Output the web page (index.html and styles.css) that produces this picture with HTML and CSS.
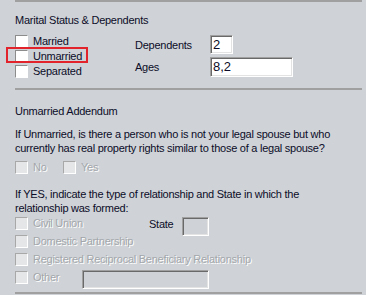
FILE: index.html
```html
<!DOCTYPE html>
<html>
<head>
<meta charset="utf-8">
<link rel="stylesheet" href="styles.css">
</head>
<body>
<div class="panel">
  <section class="group first">
    <h2 class="title">Marital Status &amp; Dependents</h2>
    <div class="status">
      <div class="checks">
        <label class="check"><span class="box"></span><span class="text">Married</span></label>
        <label class="check highlight"><span class="box"></span><span class="text">Unmarried</span></label>
        <label class="check"><span class="box"></span><span class="text">Separated</span></label>
      </div>
      <div class="fields">
        <span class="lbl">Dependents</span><span class="input small">2</span>
        <span class="lbl">Ages</span><span class="input wide">8,2</span>
      </div>
    </div>
  </section>
  <section class="group second">
    <h2 class="title">Unmarried Addendum</h2>
    <p class="para">If Unmarried, is there a person who is not your legal spouse but who<br>currently has real property rights similar to those of a legal spouse?</p>
    <div class="yesno">
      <label class="check off"><span class="box"></span><span class="text">No</span></label>
      <label class="check off"><span class="box"></span><span class="text">Yes</span></label>
    </div>
    <p class="para second-para">If YES, indicate the type of relationship and State in which the<br>relationship was formed:</p>
    <div class="relations">
      <div class="rel">
        <label class="check off"><span class="box"></span><span class="text civil">Civil Union</span></label>
        <span class="lbl state">State</span><span class="input off statebox"></span>
      </div>
      <div class="rel">
        <label class="check off"><span class="box"></span><span class="text">Domestic Partnership</span></label>
      </div>
      <div class="rel">
        <label class="check off"><span class="box"></span><span class="text">Registered Reciprocal Beneficiary Relationship</span></label>
      </div>
      <div class="rel">
        <label class="check off"><span class="box"></span><span class="text other">Other</span></label>
        <span class="input off otherbox"></span>
      </div>
    </div>
  </section>
</div>
</body>
</html>
```

FILE: styles.css
```css
html, body {
  margin: 0;
  padding: 0;
  background: #cfd3d7;
}
body {
  width: 366px;
  height: 295px;
  overflow: hidden;
  font-family: "Liberation Sans", Arial, sans-serif;
  font-size: 11px;
  line-height: 14px;
  letter-spacing: -0.25px;
  color: #0c0c28;
}
.panel {
  margin-left: 15px;
  width: 347px;
}
.group {
  border-top: 2px solid #a0a0a0;
}
.first {
  padding: 11px 0 8px;
}
.second {
  padding: 14px 0 3px;
  border-bottom: 2px solid #a0a0a0;
}
.title {
  margin: 0;
  font-size: 11px;
  font-weight: normal;
  line-height: 14px;
}
.status {
  display: flex;
  margin-top: 8px;
}
.checks {
  width: 120px;
  display: flex;
  flex-direction: column;
}
.check {
  display: flex;
  align-items: flex-start;
  height: 15px;
  position: relative;
}
.box {
  box-sizing: border-box;
  width: 13px;
  height: 13px;
  flex: none;
  border: 1px solid;
  border-color: #8c8c8c #ffffff #ffffff #8c8c8c;
  background: #ffffff;
  margin-right: 5px;
}
.text {
  margin-top: -1px;
  white-space: nowrap;
}
.highlight::after {
  content: "";
  position: absolute;
  left: -9px;
  top: -3px;
  width: 78px;
  height: 12px;
  border: 2px solid #e3232b;
}
.fields {
  display: grid;
  grid-template-columns: 75px auto;
  grid-template-rows: 19px 20px;
  row-gap: 3px;
  align-items: center;
}
.input {
  box-sizing: border-box;
  display: block;
  border: 1px solid;
  border-color: #a0a0a0 #ffffff #ffffff #a0a0a0;
  box-shadow: inset 1px 1px 0 #696969, inset -1px -1px 0 #e3e3e3;
  background: #ffffff;
  font-size: 13px;
  line-height: 17px;
  letter-spacing: 0;
  padding-left: 2px;
  color: #0c0c28;
}
.small {
  width: 23px;
  height: 19px;
}
.wide {
  width: 83px;
  height: 20px;
}
.para {
  margin: 9px 0 0;
}
.yesno {
  display: flex;
  margin-top: 6px;
  height: 13px;
}
.yesno .check {
  width: 48px;
  height: 13px;
}
.second-para {
  margin-top: 13px;
}
.relations {
  margin-top: 2px;
  display: grid;
  grid-template-rows: repeat(4, 18px);
}
.rel {
  display: flex;
  align-items: flex-start;
}
.off .box {
  background: #e4e6e8;
  border-color: #a8a8a8 #ffffff #ffffff #a8a8a8;
}
.off .text {
  color: #a3a7ab;
  text-shadow: 1px 1px 0 #ffffff;
}
.civil {
  width: 116px;
}
.other {
  width: 49px;
}
.state {
  width: 33px;
}
.input.off {
  background: #cfd3d7;
}
.statebox {
  width: 27px;
  height: 19px;
}
.otherbox {
  width: 127px;
  height: 19px;
  margin-top: -1px;
}
```
